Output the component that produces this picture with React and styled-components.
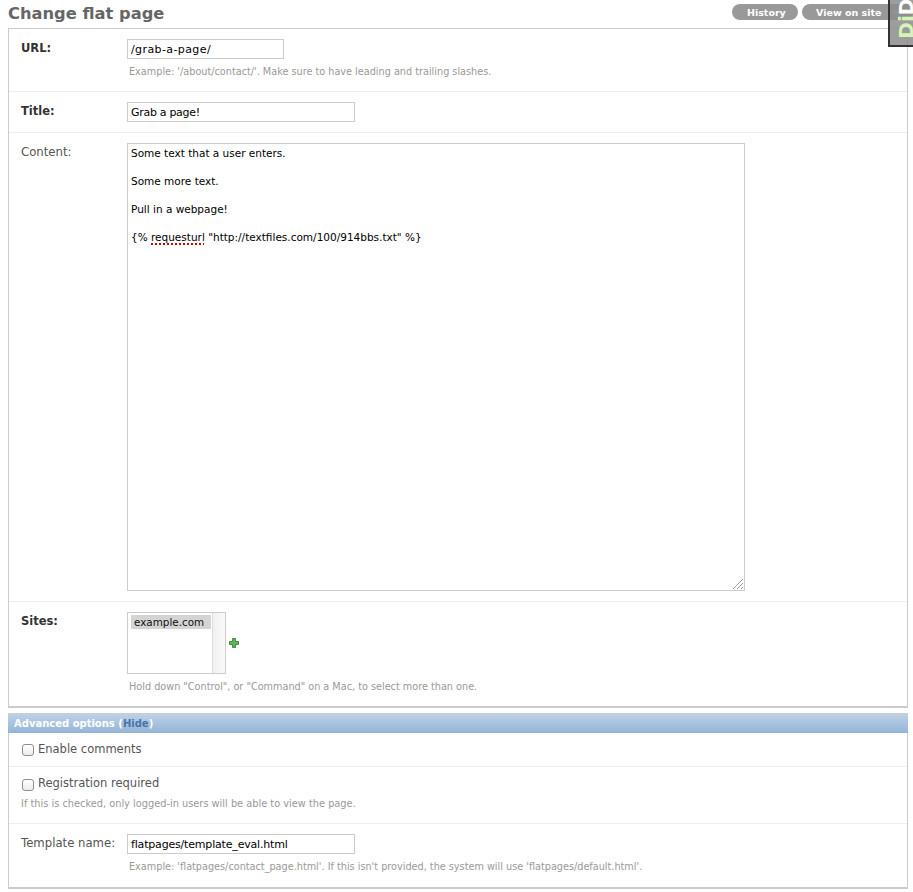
import React from 'react';
import styled, { createGlobalStyle } from 'styled-components';

const Global = createGlobalStyle`
  html, body { margin: 0; padding: 0; background: #fff; }
  body { font-family: "DejaVu Sans", Verdana, sans-serif; font-size: 12px; color: #333; }
`;

const Page = styled.div`
  position: relative;
  width: 913px;
  height: 892px;
  overflow: hidden;
  box-sizing: border-box;
  padding: 0 5px 0 8px;
`;

const Header = styled.div`
  display: flex;
  justify-content: space-between;
  height: 28px;
`;

const Heading = styled.h1`
  margin: 0;
  padding-top: 4px;
  font-size: 16.3px;
  line-height: 20px;
  font-weight: bold;
  color: #666;
`;

const Tools = styled.div`
  display: flex;
  gap: 4px;
  padding-top: 4px;
  margin-right: -5px;
`;

const Tool = styled.a`
  display: flex;
  align-items: center;
  box-sizing: border-box;
  width: ${p => p.$w}px;
  height: 16px;
  padding-left: ${p => p.$pad}px;
  border-radius: 8px;
  background: #999;
  color: #fff;
  font-size: 9.5px;
  font-weight: bold;
  line-height: 15px;
`;

const ToolArrow = styled.svg`
  margin-left: 12px;
`;

const Panel = styled.div`
  border: 1px solid #ccc;
  border-bottom-width: 2px;
  margin-bottom: ${p => p.$mb || 0}px;
`;

const PanelTitle = styled.div`
  box-sizing: border-box;
  height: 20px;
  margin: -1px -1px 0;
  padding-left: 6px;
  background: linear-gradient(#bcd2e8, #94b4d6);
  border-top: 1px solid #ccc;
  color: #fff;
  font-size: 10px;
  font-weight: bold;
  line-height: 19px;
`;

const HideLink = styled.a`
  color: #4a74ab;
`;

const Row = styled.div`
  box-sizing: border-box;
  height: ${p => p.$h}px;
  padding: ${p => p.$top ?? 10}px 12px 0;
  border-bottom: 1px solid ${p => (p.$last ? 'transparent' : '#eee')};
`;

const FieldLine = styled.div`
  display: flex;
  align-items: flex-start;
`;

const Label = styled.label`
  flex: none;
  width: 106px;
  padding-top: 1px;
  font-size: ${p => (p.$required ? 11.5 : 11.7)}px;
  line-height: 16px;
  font-weight: ${p => (p.$required ? 'bold' : 'normal')};
  color: ${p => (p.$required ? '#333' : '#555')};
`;

const TextBox = styled.input`
  display: block;
  box-sizing: border-box;
  width: ${p => p.$w}px;
  height: 20px;
  margin: 0;
  padding: 0 3px;
  border: 1px solid #ccc;
  outline: none;
  font-family: inherit;
  font-size: 11px;
  letter-spacing: ${p => p.$spacing}px;
  color: #000;
  background: #fff;
`;

const Help = styled.p`
  margin: 6px 0 0 108px;
  font-size: 9.7px;
  line-height: 13px;
  color: #999;
`;

const TextArea = styled.div`
  position: relative;
  box-sizing: border-box;
  width: 618px;
  height: 448px;
  padding: 2px 3px 3px;
  border: 1px solid #ccc;
  font-size: 10.5px;
  line-height: 14px;
  color: #000;
`;

const TextLine = styled.div`
  height: 14px;
`;

const Misspelt = styled.span`
  text-decoration: underline dotted #d00000 2px;
  text-underline-offset: 2px;
`;

const Grip = styled.svg`
  position: absolute;
  right: 0;
  bottom: 0;
`;

const SelectWrap = styled.div`
  display: flex;
  align-items: center;
  gap: 3px;
`;

const ListBox = styled.div`
  display: flex;
  box-sizing: border-box;
  width: 99px;
  height: 62px;
  border: 1px solid #ccc;
`;

const Options = styled.div`
  flex: 1;
  padding: 2px 1px 2px 3px;
`;

const Option = styled.div`
  height: 14px;
  padding-left: 3px;
  background: #d4d4d4;
  font-size: 10.4px;
  line-height: 14px;
  color: #111;
`;

const Track = styled.div`
  width: 12px;
  border-left: 1px solid #ddd;
  background: linear-gradient(90deg, #f0f0f0, #fafafa);
`;

const CheckLine = styled.label`
  display: flex;
  align-items: flex-start;
  gap: 4px;
  font-size: 11.5px;
  line-height: 16px;
  color: #555;
`;

const Check = styled.input.attrs({ type: 'checkbox' })`
  appearance: none;
  box-sizing: border-box;
  width: 12px;
  height: 12px;
  margin: ${p => p.$drop}px 0 0 1px;
  border: 1px solid #8e8e8e;
  border-radius: 3px;
  background: linear-gradient(#fff, #ececec);
`;

const RowHelp = styled.p`
  margin: 6px 0 0;
  font-size: 9.8px;
  line-height: 13px;
  color: #999;
`;

const DebugTab = styled.div`
  position: absolute;
  top: -4px;
  right: -4px;
  box-sizing: border-box;
  width: 29px;
  height: 51px;
  border: 2px solid #333;
  background: rgba(140, 140, 140, 0.85);
  overflow: hidden;
`;

const DebugText = styled.span`
  position: absolute;
  bottom: 6px;
  left: 7px;
  writing-mode: vertical-rl;
  transform: rotate(180deg);
  white-space: nowrap;
  font-size: 20px;
  font-weight: bold;
  line-height: 18px;
  color: #d6f5b4;
`;

const DebugRest = styled.span`
  color: #fff;
`;

const PlusIcon = () => (
  <svg width="10" height="10" viewBox="0 0 10 10">
    <path d="M3.5.5h3v3h3v3h-3v3h-3v-3h-3v-3h3z" fill="#5fb35a" stroke="#3d8a3a" strokeWidth="1" />
  </svg>
);

export default function App() {
  return (
    <Page>
      <Global />
      <Header>
        <Heading>Change flat page</Heading>
        <Tools>
          <Tool $w={66} $pad={15}>History</Tool>
          <Tool $w={111} $pad={14}>
            View on site
            <ToolArrow width="10" height="8" viewBox="0 0 10 8">
              <path d="M0 4h7M5 1l3 3-3 3" stroke="#ccc" strokeWidth="1.4" fill="none" />
            </ToolArrow>
          </Tool>
        </Tools>
      </Header>

      <Panel $mb={5}>
        <Row $h={63}>
          <FieldLine>
            <Label $required>URL:</Label>
            <TextBox $w={157} $spacing={0.4} readOnly value="/grab-a-page/" />
          </FieldLine>
          <Help>Example: '/about/contact/'. Make sure to have leading and trailing slashes.</Help>
        </Row>
        <Row $h={41}>
          <FieldLine>
            <Label $required>Title:</Label>
            <TextBox $w={228} $spacing={-0.3} readOnly value="Grab a page!" />
          </FieldLine>
        </Row>
        <Row $h={469}>
          <FieldLine>
            <Label>Content:</Label>
            <TextArea>
              <TextLine>Some text that a user enters.</TextLine>
              <TextLine />
              <TextLine>Some more text.</TextLine>
              <TextLine />
              <TextLine>Pull in a webpage!</TextLine>
              <TextLine />
              <TextLine>{'{% '}<Misspelt>requesturl</Misspelt>{' "http://textfiles.com/100/914bbs.txt" %}'}</TextLine>
              <Grip width="12" height="12" viewBox="0 0 12 12">
                <path d="M1 11 11 1M5 11l6-6M9 11l2-2" stroke="#999" strokeWidth="1" fill="none" />
              </Grip>
            </TextArea>
          </FieldLine>
        </Row>
        <Row $h={104} $last>
          <FieldLine>
            <Label $required>Sites:</Label>
            <SelectWrap>
              <ListBox>
                <Options><Option>example.com</Option></Options>
                <Track />
              </ListBox>
              <PlusIcon />
            </SelectWrap>
          </FieldLine>
          <Help>Hold down "Control", or "Command" on a Mac, to select more than one.</Help>
        </Row>
      </Panel>

      <Panel>
        <PanelTitle>Advanced options (<HideLink>Hide</HideLink>)</PanelTitle>
        <Row $h={34} $top={8}>
          <CheckLine><Check $drop={3} readOnly />Enable comments</CheckLine>
        </Row>
        <Row $h={57} $top={8}>
          <CheckLine><Check $drop={4} readOnly />Registration required</CheckLine>
          <RowHelp>If this is checked, only logged-in users will be able to view the page.</RowHelp>
        </Row>
        <Row $h={63} $last>
          <FieldLine>
            <Label>Template name:</Label>
            <TextBox $w={228} $spacing={-0.18} readOnly value="flatpages/template_eval.html" />
          </FieldLine>
          <Help>Example: 'flatpages/contact_page.html'. If this isn't provided, the system will use 'flatpages/default.html'.</Help>
        </Row>
      </Panel>

      <DebugTab><DebugText>Dj<DebugRest>DT</DebugRest></DebugText></DebugTab>
    </Page>
  );
}
